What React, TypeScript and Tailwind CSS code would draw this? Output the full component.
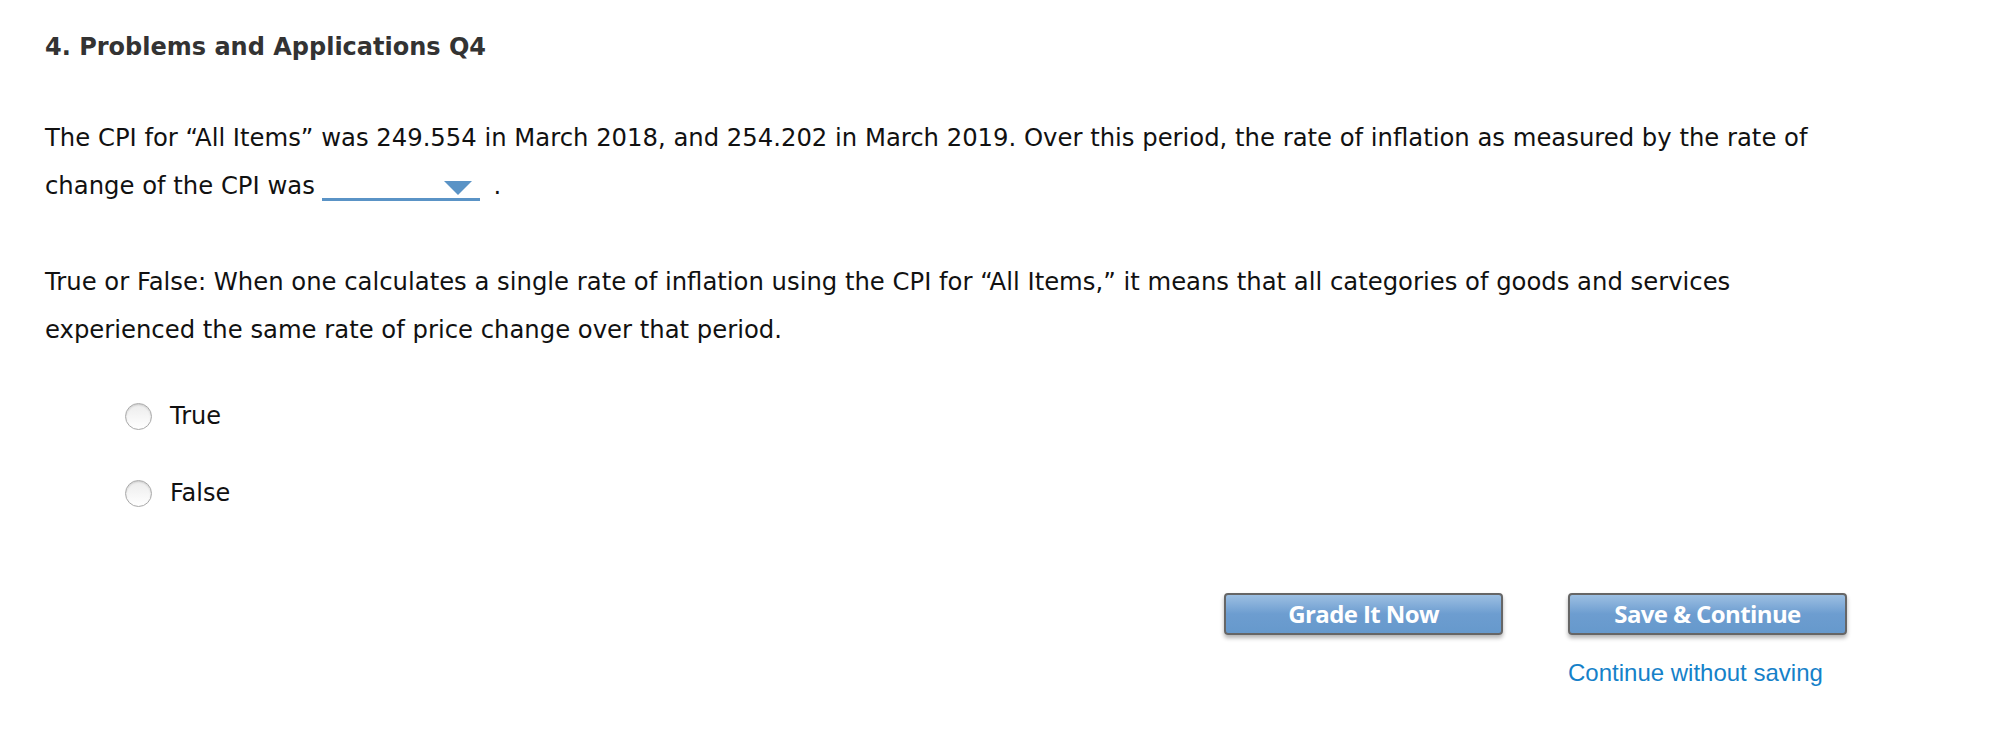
import React from "react";

const body = { fontFamily: '"DejaVu Sans", Verdana, sans-serif' };

function Radio({ label }: { label: string }) {
  return (
    <div className="flex items-center h-[30px]">
      <span className="w-[27px] h-[27px] rounded-full border border-[#a9a9a9] bg-gradient-to-b from-[#ececec] to-white shadow-[inset_0_1px_2px_rgba(0,0,0,0.15)]" />
      <span className="ml-[18px] text-[24px] text-[#111]">{label}</span>
    </div>
  );
}

function Btn({ children }: { children: React.ReactNode }) {
  return (
    <button
      className="w-[279px] h-[42px] rounded-[4px] border-2 border-[#666] bg-gradient-to-b from-[#9cbfe2] via-[#6d9dd0] to-[#6699cc] text-white font-bold text-[24px] tracking-[-0.6px] shadow-[0_3px_4px_rgba(0,0,0,0.3)] flex items-center justify-center"
      style={{ fontFamily: '"Open Sans", sans-serif' }}
    >
      {children}
    </button>
  );
}

export default function App() {
  return (
    <div className="w-[1996px] h-[744px] bg-white relative" style={body}>
      <div className="pl-[45px] pt-[33px]">
        <h1 className="text-[24px] leading-[28px] font-bold text-[#333]">4. Problems and Applications Q4</h1>
        <p className="mt-[53px] text-[24.3px] leading-[48px] text-[#111]">
          The CPI for “All Items” was 249.554 in March 2018, and 254.202 in March 2019. Over this period, the rate of inflation as measured by the rate of
          <br />
          change of the CPI was{" "}
          <span className="relative inline-block align-baseline w-[158px] h-[20px] mb-[-7px] border-b-[3px] border-[#5a93c6] ml-[-1px] mr-[14px]">
            <svg className="absolute right-[8px] top-0" width="28" height="14" viewBox="0 0 28 14">
              <polygon points="0,0 28,0 14,14" fill="#5a93c6" />
            </svg>
          </span>
          .
        </p>
        <p className="mt-[48px] text-[24.3px] leading-[48px] text-[#111]">
          True or False: When one calculates a single rate of inflation using the CPI for “All Items,” it means that all categories of goods and services
          <br />
          experienced the same rate of price change over that period.
        </p>
        <div className="ml-[80px] mt-[47px] flex flex-col gap-[47px]">
          <Radio label="True" />
          <Radio label="False" />
        </div>
      </div>
      <div className="absolute left-[1224px] top-[593px] flex gap-[65px]">
        <div>
          <Btn>Grade It Now</Btn>
        </div>
        <div className="flex flex-col">
          <Btn>Save &amp; Continue</Btn>
          <a className="mt-[20px] text-[24px] text-[#1581c9]" style={{ fontFamily: '"Liberation Sans", Arial, sans-serif' }}>
            Continue without saving
          </a>
        </div>
      </div>
    </div>
  );
}
